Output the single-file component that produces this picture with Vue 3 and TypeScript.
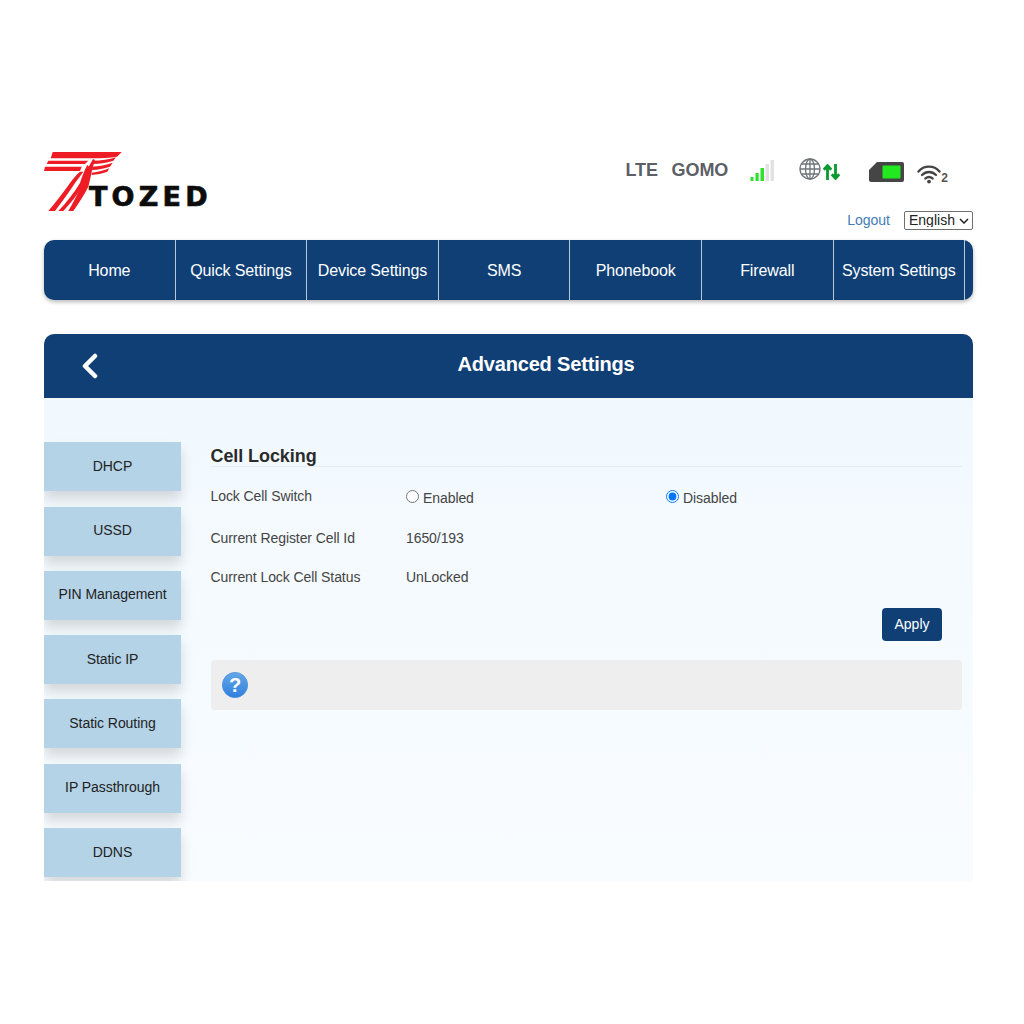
<script setup lang="ts">
import { ref } from 'vue'

// 顶部导航
const navItems = ['Home', 'Quick Settings', 'Device Settings', 'SMS', 'Phonebook', 'Firewall', 'System Settings']

// 左侧菜单
const sideItems = ['DHCP', 'USSD', 'PIN Management', 'Static IP', 'Static Routing', 'IP Passthrough', 'DDNS']

const lang = ref('English')
const lockSwitch = ref('disabled')
</script>

<template>
  <div class="page">
    <header class="top">
      <div class="logo">
        <svg class="logo-mark" width="80" height="62" viewBox="0 0 80 62" fill="#ee1c25">
          <path d="M8.7 1 H77.7 L73 5.7 C66 7 57 7.3 49 7.3 H6.7 Z" />
          <path d="M4.3 9.7 H44.3 L41 13 H2.7 Z" />
          <path d="M1 15.7 H37.7 L36 20 H0 Z" />
          <path d="M49 9.7 C57 9.7 65 8.5 72 6.3 L69.3 9.7 C62 12 55 13 48.7 13 Z" />
          <path d="M48.3 15.7 C55 15.5 62 14 68.7 11.7 L66 15.7 C60 17.5 54 18.7 48 19 Z" />
          <path d="M47.7 21.7 C54 21.2 60 19.5 65.3 17.3 L63.3 20.7 C58 22.5 53 23.6 47.7 24 Z" />
          <path d="M49 8 C44 16 41 24 38 33 C34 42 29 52 24.3 60 H29.3 C35 52 40 44 44.3 35.7 C47 26 48 17 51 9 Z" />
          <path d="M43.3 14 C40 20 38 26 36 32 C30 42 22 52 14.3 60 H19.3 C27 52 34 43 38.7 34 C41 27 43 21 45.3 15.7 Z" />
          <path d="M36 20.7 C32 24 29 28 26 32 C19 42 11 52 4.3 60 H11 C18 51 25 41 31 32 C34 28 37 24 39.3 20.7 Z" />
        </svg>
        <span class="logo-word">TOZED</span>
      </div>

      <div class="top-right">
        <div class="status">
          <span class="status-text">LTE</span>
          <span class="status-text gomo">GOMO</span>
          <svg class="signal" width="25" height="22" viewBox="0 0 25 22">
            <rect x="0.5" y="17" width="3" height="4" fill="#2fe02f" />
            <rect x="5.5" y="13" width="3.2" height="8" fill="#2fe02f" />
            <rect x="10.5" y="8" width="3.5" height="13" fill="#2fe02f" />
            <rect x="15.5" y="4" width="3.5" height="17" fill="#e2e2e2" />
            <rect x="20.5" y="0" width="3.5" height="21" fill="#e2e2e2" />
          </svg>
          <svg class="globe" width="22" height="22" viewBox="0 0 22 22" fill="none" stroke="#6f7479" stroke-width="1.3">
            <circle cx="11" cy="11" r="10" />
            <ellipse cx="11" cy="11" rx="4.5" ry="10" />
            <path d="M11 1 V21 M1 11 H21 M2.5 6 H19.5 M2.5 16 H19.5" />
          </svg>
          <svg class="arrows" width="17" height="16" viewBox="0 0 17 16" fill="none" stroke="#0b9a2f" stroke-width="2.8">
            <path d="M4.5 16 V2 M0.8 5.8 L4.5 1.6 L8.2 5.8" />
            <path d="M12.5 0 V14 M8.8 10.2 L12.5 14.4 L16.2 10.2" />
          </svg>
          <svg class="battery" width="35" height="20" viewBox="0 0 35 20">
            <path d="M8 0 H33 Q35 0 35 2 V18 Q35 20 33 20 H2 Q0 20 0 18 V8 Z" fill="#454545" />
            <rect x="13.5" y="3.5" width="18" height="13" rx="1" fill="#22e81f" />
          </svg>
          <div class="wifi">
            <svg width="24" height="20" viewBox="0 0 24 20" fill="none" stroke="#454545" stroke-width="2.4" stroke-linecap="round">
              <path d="M1.5 7.5 C7 1 17 1 22.5 7.5" />
              <path d="M5 11 C9 7 15 7 19 11" />
              <path d="M8.4 14.4 C10.5 12.7 13.5 12.7 15.6 14.4" />
              <circle cx="12" cy="17.6" r="1.9" fill="#454545" stroke="none" />
            </svg>
            <span class="wifi-count">2</span>
          </div>
        </div>
        <div class="account">
          <a class="logout">Logout</a>
          <div class="lang-wrap">
            <select v-model="lang" class="lang">
              <option>English</option>
            </select>
            <svg class="lang-arrow" width="10" height="6" viewBox="0 0 10 6" fill="none" stroke="#222" stroke-width="1.5">
              <path d="M1 1 L5 5 L9 1" />
            </svg>
          </div>
        </div>
      </div>
    </header>

    <nav class="nav">
      <a v-for="item in navItems" :key="item" class="nav-item">{{ item }}</a>
    </nav>

    <section class="panel">
      <div class="panel-head">
        <svg class="back" width="18" height="26" viewBox="0 0 18 26" fill="none" stroke="#fff" stroke-width="4.5" stroke-linecap="round" stroke-linejoin="round">
          <path d="M14 3 L4 13 L14 23" />
        </svg>
        <h1 class="panel-title">Advanced Settings</h1>
      </div>

      <div class="panel-body">
        <aside class="side">
          <a v-for="item in sideItems" :key="item" class="side-item">{{ item }}</a>
        </aside>

        <main class="content">
          <h2 class="content-title">Cell Locking</h2>
          <div class="row row-switch">
            <span class="label">Lock Cell Switch</span>
            <label class="radio radio-first">
              <input v-model="lockSwitch" type="radio" value="enabled" />
              <span>Enabled</span>
            </label>
            <label class="radio">
              <input v-model="lockSwitch" type="radio" value="disabled" />
              <span>Disabled</span>
            </label>
          </div>
          <div class="row row-cell">
            <span class="label">Current Register Cell Id</span>
            <span>1650/193</span>
          </div>
          <div class="row row-status">
            <span class="label">Current Lock Cell Status</span>
            <span>UnLocked</span>
          </div>
          <div class="actions">
            <button class="apply">Apply</button>
          </div>
          <div class="help">
            <svg width="28" height="28" viewBox="0 0 28 28">
              <defs>
                <linearGradient id="helpFill" x1="0" y1="0" x2="0" y2="1">
                  <stop offset="0" stop-color="#65a8ea" />
                  <stop offset="1" stop-color="#2f7fdc" />
                </linearGradient>
              </defs>
              <circle cx="14" cy="14" r="12.6" fill="url(#helpFill)" stroke="#4a8fdc" stroke-width="0.8" />
              <text x="14" y="21" text-anchor="middle" class="help-mark">?</text>
            </svg>
          </div>
        </main>
      </div>
    </section>
  </div>
</template>

<style>
body {
  margin: 0;
  background: #fff;
}
</style>

<style scoped>
.page {
  box-sizing: border-box;
  width: 1024px;
  height: 1024px;
  padding: 151px 51px 0 44px;
  font-family: "Liberation Sans", Arial, sans-serif;
  color: #333;
  overflow: hidden;
}

/* 顶部 */
.top {
  display: flex;
  justify-content: space-between;
  height: 89px;
}

.logo {
  display: flex;
  align-items: flex-start;
}

.logo-word {
  margin: 30px 0 0 -35px;
  font-family: "DejaVu Sans", sans-serif;
  font-weight: 700;
  font-size: 27px;
  line-height: 32px;
  letter-spacing: 4.2px;
  color: #0c0c0c;
  -webkit-text-stroke: 0.7px #0c0c0c;
}

.top-right {
  display: flex;
  flex-direction: column;
  align-items: flex-end;
}

.status {
  display: flex;
  align-items: flex-start;
  height: 60px;
  margin-right: 25px;
  color: #5c6066;
}

.status-text {
  margin-top: 9px;
  font-size: 18px;
  font-weight: 700;
  line-height: 21px;
  letter-spacing: -0.05px;
}

.gomo {
  margin-left: 13.5px;
}

.signal {
  margin: 9px 0 0 22px;
}

.globe {
  margin: 7px 0 0 24px;
}

.arrows {
  margin: 13px 0 0 2px;
}

.battery {
  margin: 11px 0 0 29px;
}

.wifi {
  display: flex;
  align-items: flex-end;
  margin: 13px 0 0 13px;
}

.wifi-count {
  font-size: 12px;
  font-weight: 700;
  line-height: 12px;
  color: #555;
}

.account {
  display: flex;
  align-items: flex-start;
  gap: 14px;
}

.logout {
  font-size: 14px;
  line-height: 18px;
  color: #3f7cb8;
}

.lang-wrap {
  position: relative;
  height: 19px;
}

.lang {
  display: block;
  box-sizing: border-box;
  width: 69px;
  height: 19px;
  padding: 0 0 2px 4px;
  font-family: inherit;
  font-size: 14px;
  color: #222;
  background: #fff;
  border: 1px solid #707070;
  border-radius: 2px;
  appearance: none;
  -webkit-appearance: none;
}

.lang-arrow {
  position: absolute;
  top: 7px;
  right: 4px;
  pointer-events: none;
}

/* 导航 */
.nav {
  display: flex;
  height: 60px;
  background: #103f76;
  border-radius: 10px;
  box-shadow: 0 2px 4px rgba(0, 0, 0, 0.28);
}

.nav-item {
  box-sizing: border-box;
  display: flex;
  flex: 0 0 131.6px;
  align-items: center;
  justify-content: center;
  padding-top: 1px;
  font-size: 16px;
  letter-spacing: -0.12px;
  color: #fff;
  border-right: 1px solid #b9c8d8;
  white-space: nowrap;
}

/* 面板 */
.panel {
  margin-top: 34px;
}

.panel-head {
  display: flex;
  align-items: center;
  height: 64px;
  padding-left: 37px;
  background: #103f76;
  border-radius: 10px 10px 0 0;
}

.back {
  flex-shrink: 0;
}

.panel-title {
  flex: 1;
  margin: 0 0 3px;
  padding-left: 20px;
  font-size: 20px;
  font-weight: 700;
  letter-spacing: -0.17px;
  text-align: center;
  color: #fff;
}

.panel-body {
  display: flex;
  height: 483px;
  overflow: hidden;
  background: linear-gradient(#f2f9fe, #f8fcff);
}

.side {
  display: flex;
  flex-direction: column;
  flex: 0 0 137px;
  gap: 15.3px;
  padding-top: 44.3px;
}

.side-item {
  box-sizing: border-box;
  display: flex;
  flex: 0 0 49px;
  align-items: center;
  justify-content: center;
  padding-bottom: 2px;
  font-size: 14px;
  letter-spacing: -0.05px;
  color: #222;
  background: #b4d3e7;
  box-shadow: 0 8px 12px rgba(0, 0, 0, 0.14);
}

.content {
  flex: 1;
  margin: 0 11.5px 0 29.5px;
  padding-top: 48px;
  font-size: 14px;
  letter-spacing: -0.08px;
  color: #444;
}

.content-title {
  margin: 0;
  font-size: 18px;
  line-height: 20px;
  font-weight: 700;
  letter-spacing: -0.08px;
  color: #2b2b2b;
  border-bottom: 1px solid #e6edf2;
}

.row {
  display: flex;
  align-items: center;
  height: 20px;
}

.row-switch {
  margin-top: 19px;
}

.row-cell {
  margin-top: 22px;
}

.row-status {
  margin-top: 19px;
}

.label {
  flex: 0 0 195.5px;
}

.radio {
  display: flex;
  align-items: center;
  position: relative;
  top: 2px;
}

.radio-first {
  flex: 0 0 260px;
}

.radio input {
  width: 13px;
  height: 13px;
  margin: -3px 4px 0 0;
}

.actions {
  display: flex;
  justify-content: flex-end;
  margin: 21px 19.5px 0 0;
}

.apply {
  width: 60px;
  height: 33px;
  padding: 0 0 2px;
  font-family: inherit;
  font-size: 14px;
  color: #fff;
  background: #103f76;
  border: none;
  border-radius: 4px;
}

.help {
  display: flex;
  align-items: center;
  height: 50px;
  margin-top: 19px;
  padding-left: 10px;
  background: #eeeeee;
  border-radius: 4px;
}

.help-mark {
  font-family: "Liberation Sans", Arial, sans-serif;
  font-size: 20px;
  font-weight: 700;
  fill: #fff;
}
</style>
